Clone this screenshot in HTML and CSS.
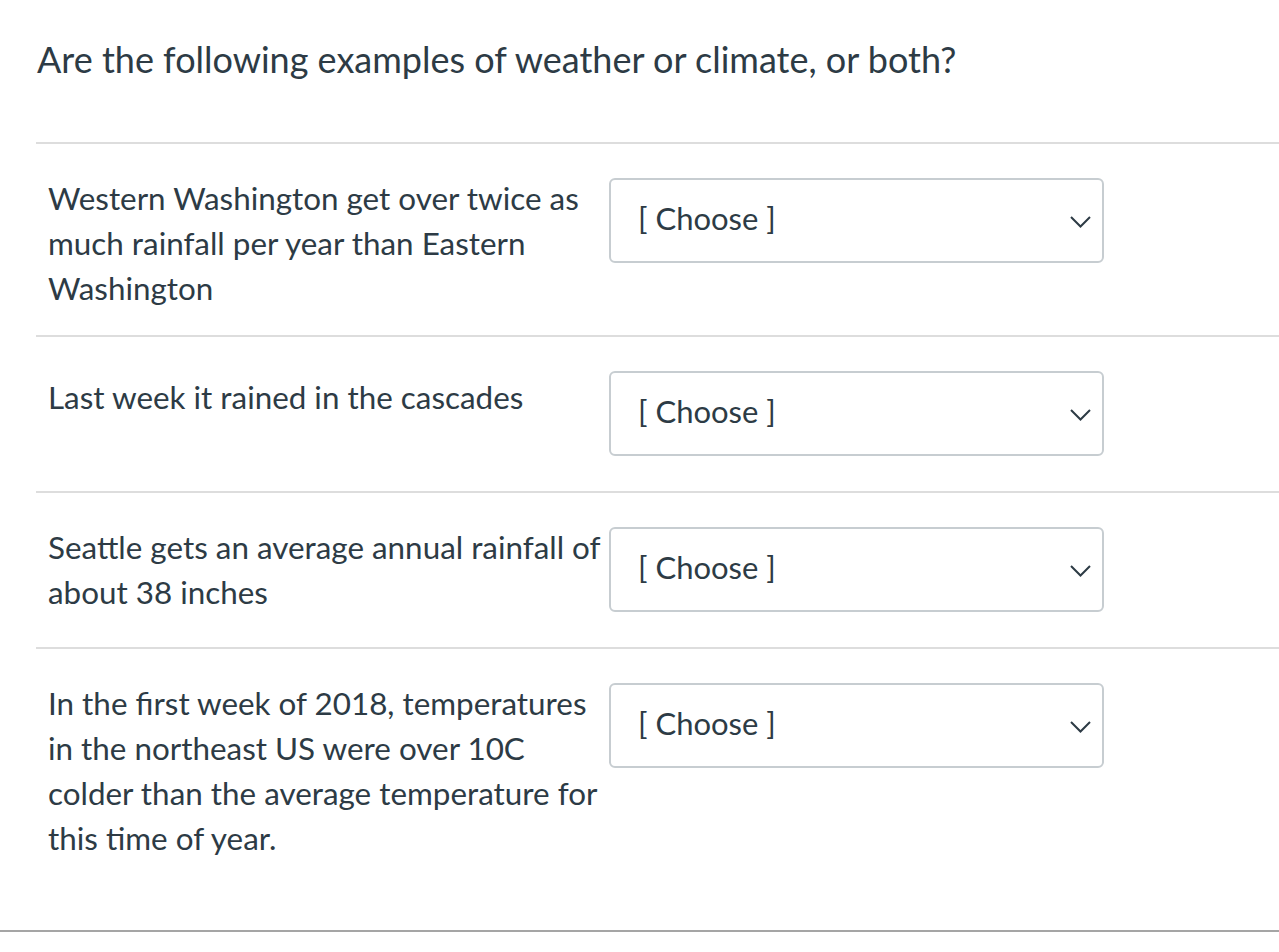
FILE: index.html
```html
<!DOCTYPE html>
<html lang="en">
<head>
<meta charset="utf-8">
<title>Weather or climate</title>
<link rel="stylesheet" href="styles.css">
</head>
<body>
<div class="quiz">
  <div class="question">
    <h1 class="question-title">Are the following examples of weather or climate, or both?</h1>
    <div class="answers">
      <div class="answer-row">
        <div class="answer-text">Western Washington get over twice as much rainfall per year than Eastern Washington</div>
        <div class="select"><span class="select-label">[ Choose ]</span><svg class="chevron" width="21" height="12" viewBox="0 0 21 12"><polyline points="1,1 10.5,10.5 20,1" fill="none" stroke="#2d3b45" stroke-width="2"/></svg></div>
      </div>
      <div class="answer-row">
        <div class="answer-text lowered">Last week it rained in the cascades</div>
        <div class="select"><span class="select-label">[ Choose ]</span><svg class="chevron" width="21" height="12" viewBox="0 0 21 12"><polyline points="1,1 10.5,10.5 20,1" fill="none" stroke="#2d3b45" stroke-width="2"/></svg></div>
      </div>
      <div class="answer-row">
        <div class="answer-text">Seattle gets an average annual rainfall of about 38 inches</div>
        <div class="select"><span class="select-label">[ Choose ]</span><svg class="chevron" width="21" height="12" viewBox="0 0 21 12"><polyline points="1,1 10.5,10.5 20,1" fill="none" stroke="#2d3b45" stroke-width="2"/></svg></div>
      </div>
      <div class="answer-row last">
        <div class="answer-text">In the first week of 2018, temperatures in the northeast US were over 10C colder than the average temperature for this time of year.</div>
        <div class="select"><span class="select-label">[ Choose ]</span><svg class="chevron" width="21" height="12" viewBox="0 0 21 12"><polyline points="1,1 10.5,10.5 20,1" fill="none" stroke="#2d3b45" stroke-width="2"/></svg></div>
      </div>
    </div>
  </div>
</div>
</body>
</html>
```
FILE: styles.css
```css
html, body {
  margin: 0;
  padding: 0;
  background: #ffffff;
}
body {
  font-family: Lato, "Open Sans", "Liberation Sans", sans-serif;
  color: #2d3b45;
}
.quiz {
  border-bottom: 2px solid #a5a5a5;
  padding-bottom: 45px;
}
.question {
  padding-left: 36px;
}
.question-title {
  margin: 0;
  padding: 38px 0 0 1px;
  font-size: 36px;
  font-weight: 400;
  line-height: 43px;
  height: 61px;
  margin-bottom: 43px;
}
.answers {
  border-top: 2px solid #dddddd;
}
.answer-row {
  display: flex;
  align-items: flex-start;
  padding: 27px 0 24px 12px;
  border-bottom: 2px solid #dddddd;
}
.answer-row.last {
  border-bottom: none;
}
.answer-text {
  width: 556px;
  padding-top: 5px;
  font-size: 31.4px;
  line-height: 45px;
  flex: none;
}
.answer-text.lowered {
  padding-top: 11px;
}
.select {
  box-sizing: border-box;
  margin: 7px 0 11px 5px;
  width: 495px;
  height: 85px;
  border: 2px solid #c7cdd1;
  border-radius: 6px;
  display: flex;
  align-items: center;
  justify-content: space-between;
  padding: 0 11px 0 27px;
  flex: none;
}
.select-label {
  font-size: 31px;
  line-height: 36px;
  position: relative;
  top: -3px;
}
.chevron {
  display: block;
  margin-top: 3px;
}
```
